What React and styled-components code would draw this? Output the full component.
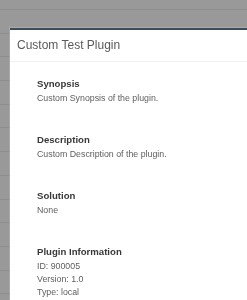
import React from "react";
import styled, { createGlobalStyle } from "styled-components";

const GlobalStyle = createGlobalStyle`
  html, body {
    margin: 0;
    padding: 0;
    background: #fff;
    font-family: "Liberation Sans", Arial, sans-serif;
  }
`;

const sections = [
  { title: "Synopsis", lines: ["Custom Synopsis of the plugin."] },
  { title: "Description", lines: ["Custom Description of the plugin."] },
  { title: "Solution", lines: ["None"] },
  {
    title: "Plugin Information",
    lines: ["ID: 900005", "Version: 1.0", "Type: local"],
  },
];

function App() {
  const rows = Array.from({ length: 13 });

  return (
    <>
      <GlobalStyle />
      <Page>
        <TopGap />
        {rows.map((_, i) => (
          <Row key={i} />
        ))}
      </Page>
      <Backdrop />
      <Modal>
        <ModalHeader>
          <ModalTitle>Custom Test Plugin</ModalTitle>
        </ModalHeader>
        <ModalBody>
          {sections.map((section) => (
            <Section key={section.title}>
              <SectionTitle>{section.title}</SectionTitle>
              {section.lines.map((line) => (
                <SectionText key={line}>{line}</SectionText>
              ))}
            </Section>
          ))}
        </ModalBody>
      </Modal>
    </>
  );
}

export default App;

const Page = styled.div`
  width: 247px;
  height: 300px;
  overflow: hidden;
  display: flex;
  flex-direction: column;
`;

const TopGap = styled.div`
  height: 9px;
  flex-shrink: 0;
  border-bottom: 1px solid #ececec;
`;

const Row = styled.div`
  height: 22.7px;
  flex-shrink: 0;
  border-bottom: 1px solid #ececec;
`;

const Backdrop = styled.div`
  position: fixed;
  inset: 0;
  background: rgba(0, 0, 0, 0.4);
`;

const Modal = styled.div`
  position: fixed;
  left: 10px;
  top: 28px;
  width: 420px;
  height: 400px;
  background: #fff;
  border-top: 2px solid #3b4c5b;
  box-shadow: 0 0 0 1px rgba(255, 255, 255, 0.15);
  display: flex;
  flex-direction: column;
`;

const ModalHeader = styled.div`
  height: 31px;
  display: flex;
  align-items: center;
  padding: 0 7px;
  border-bottom: 1px solid #f0f0f0;
`;

const ModalTitle = styled.h4`
  margin: 0;
  font-size: 12px;
  line-height: 17px;
  font-weight: normal;
  color: #5a5a5a;
`;

const ModalBody = styled.div`
  padding: 15px 27px;
  display: flex;
  flex-direction: column;
  gap: 28px;
`;

const Section = styled.div`
  display: flex;
  flex-direction: column;
`;

const SectionTitle = styled.h5`
  margin: 0 0 1px;
  font-size: 9.6px;
  line-height: 14px;
  font-weight: bold;
  color: #383838;
`;

const SectionText = styled.div`
  font-size: 8.8px;
  line-height: 13px;
  color: #5e5e5e;
`;
